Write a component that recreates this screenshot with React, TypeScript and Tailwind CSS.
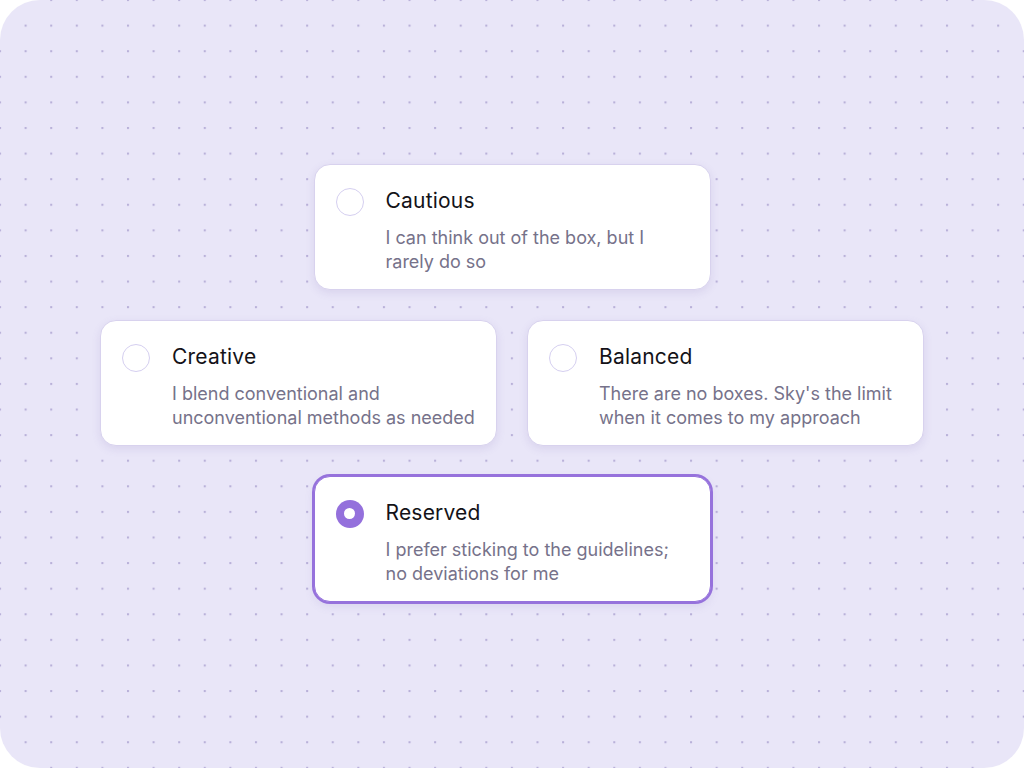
import React from "react";

type Opt = { title: string; desc: React.ReactNode; selected?: boolean };

function Card({ title, desc, selected }: Opt) {
  return (
    <div
      className={
        "flex w-[397px] h-[126px] rounded-[16px] bg-white pl-[21px] pt-[22px] " +
        (selected
          ? "ring-2 ring-[#9672dc] border border-[#9672dc] shadow-[0_4px_10px_rgba(120,100,180,0.15)]"
          : "border border-[#d8d2ee] shadow-[0_3px_8px_rgba(120,100,180,0.14)]")
      }
    >
      <div className="pt-[1px]">
        {selected ? (
          <div className="w-[28px] h-[28px] rounded-full bg-[#9470dc] flex items-center justify-center">
            <div className="w-[11px] h-[11px] rounded-full bg-white" />
          </div>
        ) : (
          <div className="w-[28px] h-[28px] rounded-full border-[1.5px] border-[#d5cff0] bg-white" />
        )}
      </div>
      <div className="ml-[22px] w-[306px]">
        <div className="text-[21px] leading-[28px] tracking-[0.2px] text-[#141318]">{title}</div>
        <div className="mt-[11px] text-[18px] leading-[24px] text-[#76728a]">{desc}</div>
      </div>
    </div>
  );
}

export default function App() {
  return (
    <div className="w-[1024px] h-[768px] bg-white" style={{ fontFamily: "Inter, 'Noto Sans', sans-serif" }}>
      <div
        className="w-full h-full rounded-[40px] bg-[#e9e6f8] flex flex-col items-center justify-center gap-[30px] pb-[3px] bg-[radial-gradient(circle_at_1px_1px,#b9b1d9_1px,transparent_1.6px)] bg-[length:25.6px_25.6px] bg-[position:-1px_-1px]"
      >
        <Card title="Cautious" desc={<>I can think out of the box, but I rarely do so</>} />
        <div className="flex gap-[30px]">
          <Card title="Creative" desc={<>I blend conventional and unconventional methods as needed</>} />
          <Card title="Balanced" desc={<>There are no boxes. Sky's the limit when it comes to my approach</>} />
        </div>
        <Card selected title="Reserved" desc={<>I prefer sticking to the guidelines; no deviations for me</>} />
      </div>
    </div>
  );
}
